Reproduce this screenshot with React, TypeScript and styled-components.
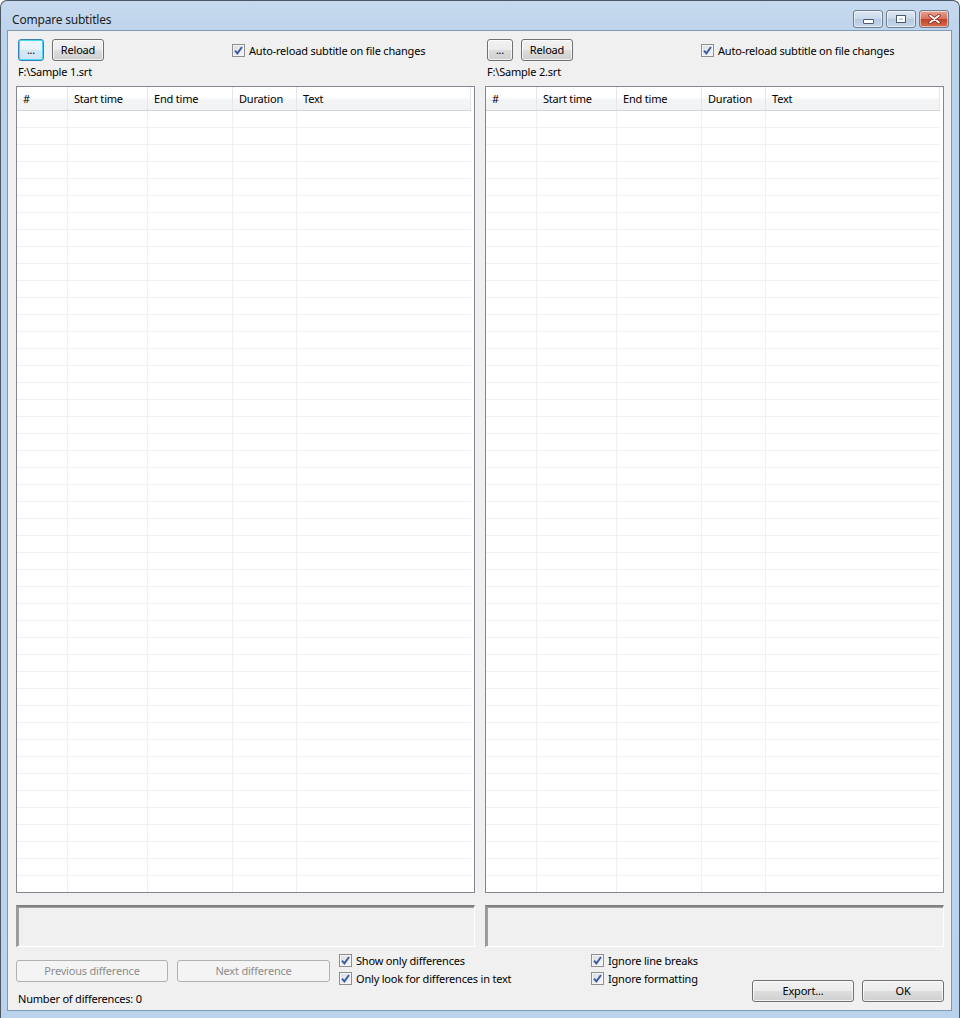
import styled, { createGlobalStyle } from 'styled-components';

const GlobalStyle = createGlobalStyle`
    html, body {
        margin: 0;
        padding: 0;
        background: #ffffff;
    }
    body {
        font-family: "Noto Sans", "Open Sans", "DejaVu Sans", sans-serif;
        font-size: 11px;
        letter-spacing: -0.2px;
        color: #000000;
    }
`;

const columns = [
    { title: '#', width: 51 },
    { title: 'Start time', width: 80 },
    { title: 'End time', width: 85 },
    { title: 'Duration', width: 64 },
    { title: 'Text', width: 0 },
];

const ROWS = 47;

export default function App() {
    return (
        <>
            <GlobalStyle />
            <Window>
                <TitleBar>
                    <Title>Compare subtitles</Title>
                    <Controls>
                        <CaptionButton>
                            <MinGlyph />
                        </CaptionButton>
                        <CaptionButton>
                            <MaxGlyph />
                        </CaptionButton>
                        <CaptionButton $close>
                            <svg width="13" height="10" viewBox="0 0 13 10">
                                <path
                                    d="M2 1.5 L11 8.5 M11 1.5 L2 8.5"
                                    stroke="#7a2418"
                                    strokeWidth="3.4"
                                    strokeLinecap="round"
                                />
                                <path
                                    d="M2 1.5 L11 8.5 M11 1.5 L2 8.5"
                                    stroke="#ffffff"
                                    strokeWidth="1.8"
                                    strokeLinecap="round"
                                />
                            </svg>
                        </CaptionButton>
                    </Controls>
                </TitleBar>
                <Client>
                    <Panels>
                        <SubtitlePanel path="F:\Sample 1.srt" focused />
                        <SubtitlePanel path="F:\Sample 2.srt" />
                    </Panels>
                    <Bottom>
                        <NavColumn>
                            <NavButtons>
                                <Button disabled $width={152}>
                                    Previous difference
                                </Button>
                                <Button disabled $width={153}>
                                    Next difference
                                </Button>
                            </NavButtons>
                            <Status>Number of differences: 0</Status>
                        </NavColumn>
                        <CheckColumn $width={252}>
                            <CheckOption label="Show only differences" />
                            <CheckOption label="Only look for differences in text" />
                        </CheckColumn>
                        <CheckColumn $width={150}>
                            <CheckOption label="Ignore line breaks" />
                            <CheckOption label="Ignore formatting" />
                        </CheckColumn>
                        <DialogButtons>
                            <Button $width={102}>Export...</Button>
                            <Button $width={82}>OK</Button>
                        </DialogButtons>
                    </Bottom>
                </Client>
            </Window>
        </>
    );
}

function SubtitlePanel({ path, focused }: PanelProps) {
    return (
        <Panel>
            <Toolbar>
                <Button $width={26} $focused={focused}>
                    ...
                </Button>
                <Button $width={52}>Reload</Button>
                <AutoReload>
                    <CheckOption label="Auto-reload subtitle on file changes" />
                </AutoReload>
            </Toolbar>
            <PathLabel>{path}</PathLabel>
            <List>
                <HeaderRow>
                    {columns.map((c) => (
                        <HeaderCell key={c.title} $width={c.width}>
                            {c.title}
                        </HeaderCell>
                    ))}
                </HeaderRow>
                <Body>
                    {Array.from({ length: ROWS }).map((_, i) => (
                        <Row key={i}>
                            {columns.map((c) => (
                                <Cell key={c.title} $width={c.width} />
                            ))}
                        </Row>
                    ))}
                </Body>
            </List>
            <TextPreview />
        </Panel>
    );
}

function CheckOption({ label }: { label: string }) {
    return (
        <CheckRow>
            <Box>
                <svg width="9" height="9" viewBox="0 0 9 9">
                    <path
                        d="M1 4.6 L3.4 7.4 L8 1"
                        fill="none"
                        stroke="#3d5aa0"
                        strokeWidth="1.9"
                    />
                </svg>
            </Box>
            <span>{label}</span>
        </CheckRow>
    );
}

const Window = styled.div`
    width: 960px;
    height: 1018px;
    box-sizing: border-box;
    display: flex;
    flex-direction: column;
    border: 1px solid #4d5866;
    border-bottom: none;
    border-radius: 7px 7px 0 0;
    background: linear-gradient(to bottom, #c6d9ee 0%, #bcd3ec 40px, #bad2ec 100%);
    padding: 0 7px 7px 6px;
    overflow: hidden;
`;

const TitleBar = styled.div`
    height: 29px;
    flex-shrink: 0;
    display: flex;
    align-items: flex-start;
    justify-content: space-between;
    padding-left: 5px;
`;

const Title = styled.div`
    font-size: 12px;
    color: #1e1e1e;
    margin-top: 10px;
`;

const Controls = styled.div`
    display: flex;
    gap: 3px;
    margin-top: 9px;
    margin-right: 3px;
`;

const CaptionButton = styled.div<{ $close?: boolean }>`
    width: 30px;
    height: 18px;
    box-sizing: border-box;
    border: 1px solid #6f7d8f;
    border-radius: 3px;
    display: flex;
    align-items: center;
    justify-content: center;
    box-shadow: inset 0 0 0 1px rgba(255, 255, 255, 0.55);
    background: ${({ $close }) =>
        $close
            ? 'linear-gradient(to bottom, #e8a093 0%, #d7735f 48%, #c2422a 52%, #d6704f 100%)'
            : 'linear-gradient(to bottom, #dde8f4 0%, #c9d9ea 48%, #b4c9e1 52%, #c5d7ea 100%)'};
`;

const MinGlyph = styled.div`
    width: 9px;
    height: 3px;
    margin-top: 5px;
    background: #ffffff;
    border: 1px solid #4b5a6e;
    border-radius: 1px;
`;

const MaxGlyph = styled.div`
    width: 8px;
    height: 6px;
    box-sizing: border-box;
    border: 2px solid #ffffff;
    outline: 1px solid #4b5a6e;
`;

const Client = styled.div`
    flex: 1;
    min-height: 0;
    display: flex;
    flex-direction: column;
    background: #f0f0f0;
    border: 1px solid #7e9ab6;
    padding: 8px 7px 7px 8px;
`;

const Panels = styled.div`
    flex: 1;
    display: grid;
    grid-template-columns: 459px 459px;
    grid-template-rows: minmax(0, 1fr);
    column-gap: 10px;
    min-height: 0;
`;

const Panel = styled.div`
    display: flex;
    flex-direction: column;
    min-height: 0;
`;

const Toolbar = styled.div`
    display: flex;
    align-items: center;
    height: 22px;
    flex-shrink: 0;
    padding-left: 2px;
    gap: 8px;
`;

const AutoReload = styled.div`
    margin-left: 120px;
`;

const Button = styled.button<{ $width: number; $focused?: boolean }>`
    width: ${({ $width }) => $width}px;
    height: 22px;
    box-sizing: border-box;
    padding: 0;
    font-family: inherit;
    font-size: 11px;
    letter-spacing: -0.2px;
    color: ${({ disabled }) => (disabled ? '#8d8d8d' : '#000000')};
    border-radius: 3px;
    border: 1px solid
        ${({ disabled, $focused }) =>
            disabled ? '#adb2b5' : $focused ? '#3c7fb1' : '#707070'};
    background: ${({ disabled, $focused }) =>
        disabled
            ? '#f4f4f4'
            : $focused
            ? 'linear-gradient(to bottom, #f0f7fb 0%, #e6f1f8 50%, #d5e8f4 50%, #cfe3f1 100%)'
            : 'linear-gradient(to bottom, #f2f2f2 0%, #ebebeb 50%, #dddddd 50%, #cfcfcf 100%)'};
    box-shadow: ${({ disabled, $focused }) =>
        disabled
            ? 'none'
            : $focused
            ? 'inset 0 0 0 1px #48d8fb'
            : 'inset 0 0 0 1px rgba(255, 255, 255, 0.7)'};
    line-height: 18px;
`;

const PathLabel = styled.div`
    margin-top: 3px;
    padding-left: 2px;
    height: 16px;
    line-height: 16px;
    flex-shrink: 0;
`;

const List = styled.div`
    flex: 1;
    margin-top: 6px;
    min-height: 0;
    background: #ffffff;
    border: 1px solid #828790;
    overflow: hidden;
    display: flex;
    flex-direction: column;
`;

const HeaderRow = styled.div`
    display: flex;
    height: 23px;
    flex-shrink: 0;
    margin-right: 3px;
    background: linear-gradient(to bottom, #ffffff 0%, #ffffff 45%, #f4f5f7 55%, #f1f2f4 100%);
    border-bottom: 1px solid #d5d5d5;
`;

const HeaderCell = styled.div<{ $width: number }>`
    ${({ $width }) => ($width ? `width: ${$width}px;` : 'flex: 1;')}
    box-sizing: border-box;
    padding-left: 6px;
    line-height: 23px;
    white-space: nowrap;
    border-right: 1px solid #e3e6ea;
`;

const Body = styled.div`
    flex: 1;
    min-height: 0;
    overflow: hidden;
    margin-right: 3px;
`;

const Row = styled.div`
    display: flex;
    height: 17px;
    box-sizing: border-box;
    border-bottom: 1px solid #f0f0f0;
`;

const Cell = styled.div<{ $width: number }>`
    ${({ $width }) => ($width ? `width: ${$width}px;` : 'flex: 1;')}
    box-sizing: border-box;
    border-right: 1px solid #f0f0f0;
    &:last-child {
        border-right: none;
    }
`;

const TextPreview = styled.div`
    height: 42px;
    flex-shrink: 0;
    margin-top: 12px;
    box-sizing: border-box;
    border-style: solid;
    border-width: 2px 1px 1px 2px;
    border-color: #808080 #ffffff #ffffff #9a9a9a;
    box-shadow: inset 1px 1px 0 #a0a0a0;
    background: #f0f0f0;
`;

const Bottom = styled.div`
    height: 56px;
    flex-shrink: 0;
    display: flex;
`;

const NavColumn = styled.div`
    width: 323px;
    display: flex;
    flex-direction: column;
    padding-top: 13px;
`;

const NavButtons = styled.div`
    display: flex;
    gap: 9px;
`;

const Status = styled.div`
    margin-top: 9px;
    padding-left: 2px;
    line-height: 16px;
`;

const CheckColumn = styled.div<{ $width: number }>`
    width: ${({ $width }) => $width}px;
    padding-top: 4px;
    display: flex;
    flex-direction: column;
`;

const CheckRow = styled.label`
    display: flex;
    align-items: center;
    gap: 4px;
    height: 18px;
    white-space: nowrap;
`;

const Box = styled.span`
    width: 13px;
    height: 13px;
    box-sizing: border-box;
    border: 1px solid #8e8f8f;
    background: linear-gradient(135deg, #d8dde3 0%, #f6f7f9 100%);
    box-shadow: inset 0 0 0 1px #f4f4f4;
    display: flex;
    align-items: center;
    justify-content: center;
`;

const DialogButtons = styled.div`
    margin-left: auto;
    align-self: flex-end;
    display: flex;
    gap: 8px;
    margin-bottom: 1px;
`;

interface PanelProps {
    path: string;
    focused?: boolean;
}
